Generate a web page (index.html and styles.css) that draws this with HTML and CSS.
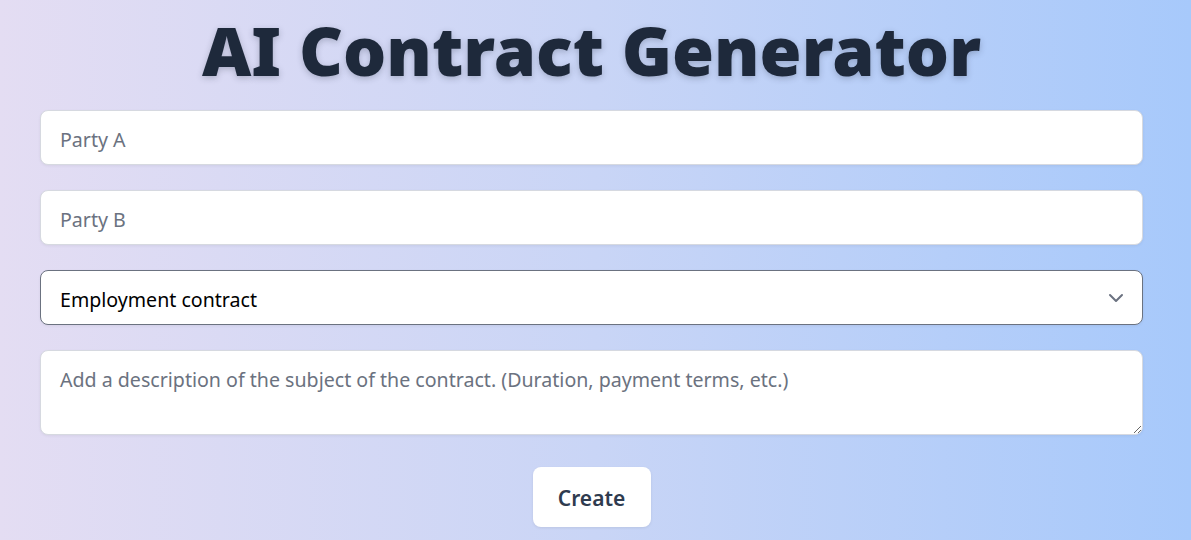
FILE: index.html
```html
<!DOCTYPE html>
<html lang="en">
<head>
<meta charset="utf-8">
<title>AI Contract Generator</title>
<link rel="stylesheet" href="styles.css">
</head>
<body>
<main class="page">
  <h1 class="title">AI Contract Generator</h1>
  <form class="form">
    <input class="field" type="text" placeholder="Party A">
    <input class="field" type="text" placeholder="Party B">
    <div class="select-wrap">
      <select class="field select">
        <option>Employment contract</option>
        <option>Service contract</option>
        <option>Sales contract</option>
      </select>
      <svg class="chevron" width="16" height="16" viewBox="0 0 16 16" aria-hidden="true"><path d="M2 5l6 6 6-6" fill="none" stroke="#6b7280" stroke-width="2" stroke-linecap="round" stroke-linejoin="round"/></svg>
    </div>
    <textarea class="field textarea" placeholder="Add a description of the subject of the contract. (Duration, payment terms, etc.)"></textarea>
    <div class="actions">
      <button class="btn" type="button">Create</button>
    </div>
  </form>
</main>
</body>
</html>
```
FILE: styles.css
```css
* { box-sizing: border-box; }
html, body { margin: 0; height: 100%; }
body {
  background: linear-gradient(90deg, #e4ddf3 0%, #c9d5f6 50%, #a7c9fb 100%);
  font-family: "Noto Sans", "Open Sans", sans-serif;
  color: #1e293b;
  overflow: hidden;
}
.page {
  padding: 0 48px 0 40px;
}
.title {
  margin: 0;
  padding-top: 8px;
  height: 110px;
  text-align: center;
  font-family: "Noto Sans", sans-serif;
  font-weight: 900;
  font-size: 68px;
  line-height: 84px;
  color: #1e293b;
  text-shadow: 0 2px 6px rgba(30, 41, 59, 0.25);
  letter-spacing: 0;
}
.form {
  display: flex;
  flex-direction: column;
  gap: 25px;
}
.field {
  display: block;
  width: 100%;
  height: 55px;
  border: 1px solid #d6d9e0;
  border-radius: 8px;
  background: #fff;
  padding: 3px 19px 0;
  font-family: "Noto Sans", sans-serif;
  font-size: 19.6px;
  color: #111;
  box-shadow: 0 1px 3px rgba(0, 0, 0, 0.06);
  outline: none;
}
.field::placeholder { color: #6b7280; }
.select-wrap { position: relative; }
.select {
  appearance: none;
  -webkit-appearance: none;
  border-color: #6b7280;
  color: #000;
}
.chevron {
  position: absolute;
  right: 19px;
  top: 20px;
  pointer-events: none;
}
.textarea {
  height: 85px;
  padding: 15px 19px;
  resize: vertical;
  line-height: 1.4;
}
.actions {
  display: flex;
  justify-content: center;
  padding-top: 7px;
}
.btn {
  width: 118px;
  height: 60px;
  border: none;
  border-radius: 8px;
  background: #fff;
  padding-top: 2px;
  font-family: "Noto Sans", sans-serif;
  font-weight: 600;
  font-size: 21px;
  color: #2f3b4f;
  box-shadow: 0 1px 3px rgba(0, 0, 0, 0.08);
  cursor: pointer;
}
```
